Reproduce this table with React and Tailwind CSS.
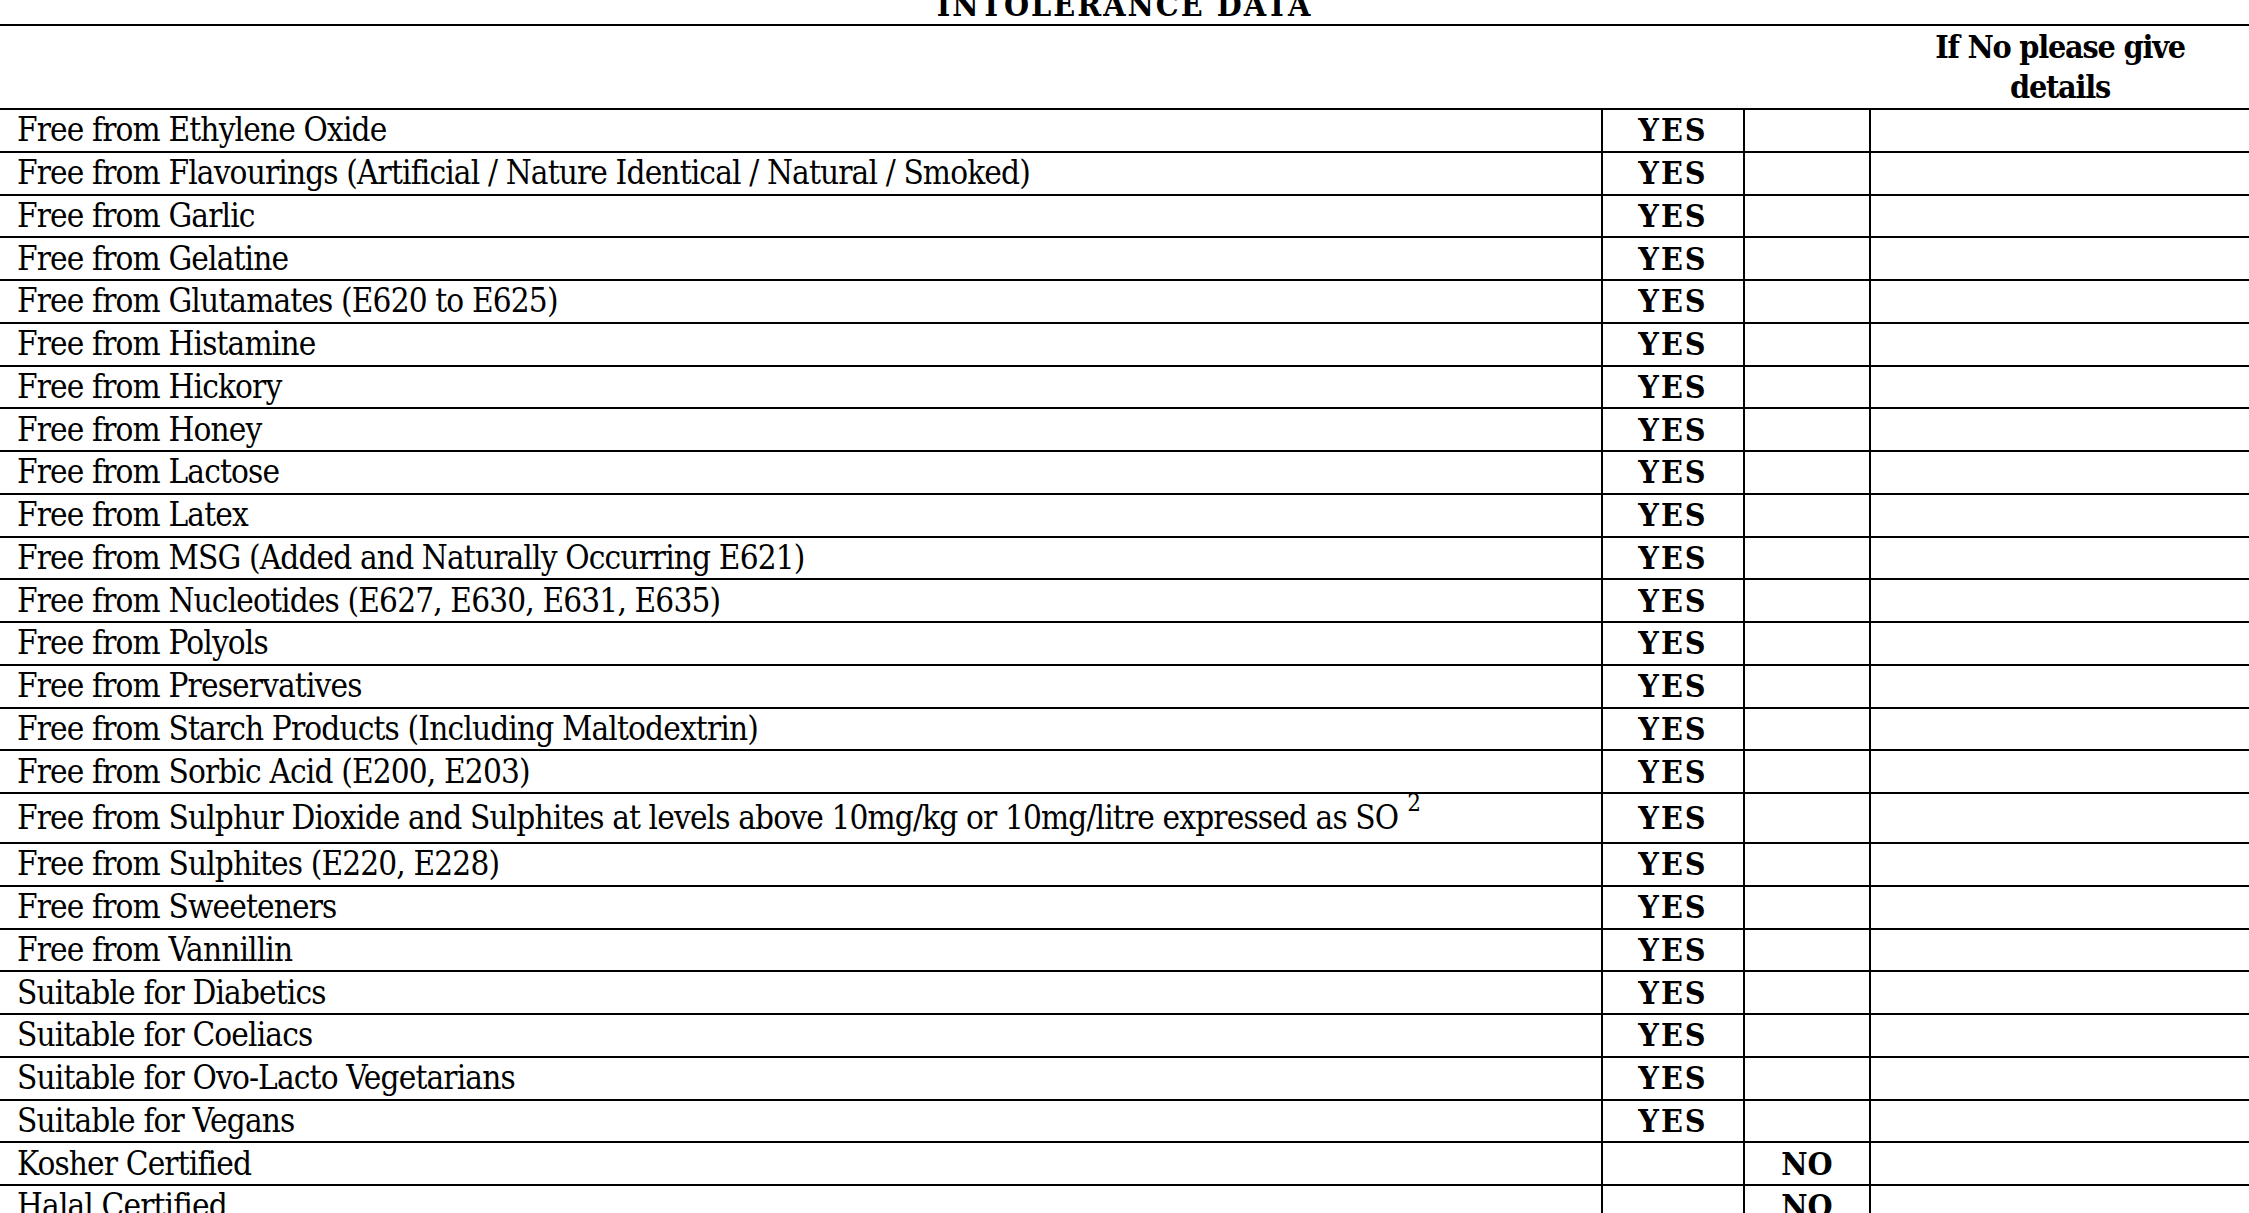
import React from 'react';

const rows = [
  { label: 'Free from Ethylene Oxide', yes: true },
  { label: 'Free from Flavourings (Artificial / Nature Identical / Natural / Smoked)', yes: true },
  { label: 'Free from Garlic', yes: true },
  { label: 'Free from Gelatine', yes: true },
  { label: 'Free from Glutamates (E620 to E625)', yes: true },
  { label: 'Free from Histamine', yes: true },
  { label: 'Free from Hickory', yes: true },
  { label: 'Free from Honey', yes: true },
  { label: 'Free from Lactose', yes: true },
  { label: 'Free from Latex', yes: true },
  { label: 'Free from MSG (Added and Naturally Occurring E621)', yes: true },
  { label: 'Free from Nucleotides (E627, E630, E631, E635)', yes: true },
  { label: 'Free from Polyols', yes: true },
  { label: 'Free from Preservatives', yes: true },
  { label: 'Free from Starch Products (Including Maltodextrin)', yes: true },
  { label: 'Free from Sorbic Acid (E200, E203)', yes: true },
  { label: 'Free from Sulphur Dioxide and Sulphites at levels above 10mg/kg or 10mg/litre expressed as SO', sup: '2', yes: true, tall: true },
  { label: 'Free from Sulphites (E220, E228)', yes: true },
  { label: 'Free from Sweeteners', yes: true },
  { label: 'Free from Vannillin', yes: true },
  { label: 'Suitable for Diabetics', yes: true },
  { label: 'Suitable for Coeliacs', yes: true },
  { label: 'Suitable for Ovo-Lacto Vegetarians', yes: true },
  { label: 'Suitable for Vegans', yes: true },
  { label: 'Kosher Certified', yes: false },
  { label: 'Halal Certified', yes: false },
];

const Row = ({ row }) => (
  <div className={`flex border-b-2 border-black ${row.tall ? 'h-[50px]' : 'h-[42.75px]'}`}>
    <div className="w-[1603px] shrink-0 border-r-2 border-black pl-[17px] flex items-center text-[33px] leading-[38px] tracking-[-0.85px] whitespace-nowrap">
      <span>
        {row.label}
        {row.sup && <sup className="ml-[9px] text-[24px] relative -top-[18px]">{row.sup}</sup>}
      </span>
    </div>
    <div className="w-[142px] shrink-0 border-r-2 border-black flex items-center justify-center text-[32px] leading-[38px] font-bold tracking-[2px]">
      {row.yes ? 'YES' : ''}
    </div>
    <div className="w-[126px] shrink-0 border-r-2 border-black flex items-center justify-center text-[32px] leading-[38px] font-bold">
      {row.yes ? '' : 'NO'}
    </div>
    <div className="flex-1" />
  </div>
);

export default function App() {
  return (
    <div className="min-h-screen bg-white text-black font-['DejaVu_Serif_Condensed','DejaVu_Serif',serif] overflow-hidden">
      <div className="h-[26px] border-b-2 border-black text-center text-[32px] leading-[10px] font-bold tracking-[2px]">
        INTOLERANCE DATA
      </div>
      <div className="h-[84px] border-b-2 border-black flex">
        <div className="w-[1871px] shrink-0" />
        <div className="flex-1 text-center text-[32px] leading-[40px] font-bold tracking-[-1.2px] pt-[1px]">
          If No please give
          <br />
          details
        </div>
      </div>
      {rows.map((row) => (
        <Row key={row.label} row={row} />
      ))}
    </div>
  );
}
